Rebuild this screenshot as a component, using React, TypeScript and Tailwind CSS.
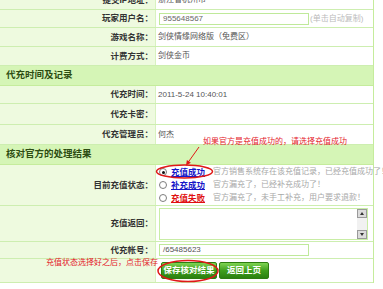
import React from "react";

// 代充订单核对页面 (截图片段)
const FONT = "font-['Liberation_Sans','Noto_Sans_CJK_SC',sans-serif]";

function Row({
  label,
  className = "h-[19px]",
  children,
}: {
  label?: string;
  className?: string;
  children?: React.ReactNode;
}) {
  return (
    <div className={`flex border-b border-[#cdeeb0] ${className}`}>
      <div className="w-[155px] shrink-0 bg-[#eefadf] flex items-center justify-end pr-[2px] text-[8.5px] font-bold text-[#333]">
        {label}
      </div>
      <div className="flex-1 min-w-0 bg-white border-l border-[#d8f2c0] flex items-center pl-[2px] text-[8px] text-[#555]">
        {children}
      </div>
    </div>
  );
}

function Header({ title }: { title: string }) {
  return (
    <div className="h-[20px] bg-[#d5f5b6] border-b border-[#c5ec9c] flex items-center pl-[6px] text-[9.5px] font-bold text-[#2d4d12]">
      {title}
    </div>
  );
}

function Radio({ checked }: { checked?: boolean }) {
  return (
    <span className="w-[8px] h-[8px] rounded-full border border-[#7d7d7d] bg-white flex items-center justify-center shrink-0">
      {checked && <span className="w-[3px] h-[3px] rounded-full bg-[#111]" />}
    </span>
  );
}

const options = [
  { text: "充值成功", color: "text-[#1515c8]", desc: "官方销售系统存在该充值记录，已经充值成功了！", checked: true },
  { text: "补充成功", color: "text-[#1515c8]", desc: "官方漏充了，已经补充成功了！" },
  { text: "充值失败", color: "text-[#e01010]", desc: "官方漏充了，未手工补充，用户要求退款！" },
];

export default function App() {
  return (
    <div className={`relative w-[383px] h-[289px] overflow-hidden bg-white ${FONT}`}>
      <div className="w-[374px] -mt-[9px] border-r border-[#c5ec9c]">
        <Row label="提交IP地址：">浙江省杭州市</Row>
        <Row label="玩家用户名：" className="h-[18px]">
          <div className="ml-[1px] w-[150px] h-[12px] border border-[#bfe99a] flex items-center pl-[3px] text-[#666]">
            955648567
          </div>
          <span className="ml-[1px] text-[#bbb]">(单击自动复制)</span>
        </Row>
        <Row label="游戏名称：">剑侠情缘网络版（免费区）</Row>
        <Row label="计费方式：">剑侠金币</Row>

        <Header title="代充时间及记录" />
        <Row label="代充时间：" className="h-[18px]">2011-5-24 10:40:01</Row>
        <Row label="代充卡密：" className="h-[21px]" />
        <Row label="代充管理员：" className="h-[20px]">何杰</Row>

        <Header title="核对官方的处理结果" />
        <Row label="目前充值状态：" className="h-[41px]">
          <div className="flex flex-col pl-[1px]">
            {options.map((o) => (
              <div key={o.text} className="h-[13px] flex items-center whitespace-nowrap">
                <Radio checked={o.checked} />
                <span className={`ml-[4px] font-bold underline ${o.color} text-[8.5px]`}>{o.text}</span>
                <span className="ml-[8px] text-[#a8a8a8]">{o.desc}</span>
              </div>
            ))}
          </div>
        </Row>
        <Row label="充值返回：" className="h-[36px]">
          <div className="ml-[1px] w-[209px] h-[32px] border border-[#c8eda5] bg-white flex justify-end">
            <div className="w-[10px] h-full flex flex-col bg-[#f1f1f1]">
              <div className="h-[9px] bg-[#dcdcdc] border border-[#9a9a9a] flex items-center justify-center">
                <span className="border-x-[2.5px] border-x-transparent border-b-[3px] border-b-[#333]" />
              </div>
              <div className="flex-1" />
              <div className="h-[9px] bg-[#dcdcdc] border border-[#9a9a9a] flex items-center justify-center">
                <span className="border-x-[2.5px] border-x-transparent border-t-[3px] border-t-[#333]" />
              </div>
            </div>
          </div>
        </Row>
        <Row label="代充帐号：" className="h-[17px]">
          <div className="ml-[1px] w-[150px] h-[12px] border border-[#bfe99a] flex items-center pl-[3px] text-[#555]">
            /65485623
          </div>
        </Row>
        <Row label="" className="h-[24px]">
          <div className="ml-[3px] flex gap-[2px]">
            <button
              type="button"
              className="w-[56px] h-[17px] rounded-[2px] border border-[#2d7d10] bg-gradient-to-b from-[#7ed452] via-[#3f9f1c] to-[#2a8010] text-white text-[8.5px] font-bold"
            >
              保存核对结果
            </button>
            <button
              type="button"
              className="w-[50px] h-[17px] rounded-[2px] border border-[#2d7d10] bg-gradient-to-b from-[#7ed452] via-[#3f9f1c] to-[#2a8010] text-white text-[8.5px] font-bold"
            >
              返回上页
            </button>
          </div>
        </Row>
      </div>

      {/* 标注 */}
      <span className="absolute left-[203px] top-[137px] text-[8px] leading-[9px] text-[#e4202a] whitespace-nowrap">
        如果官方是充值成功的，请选择充值成功
      </span>
      <span className="absolute left-[46px] top-[258px] text-[8px] leading-[9px] text-[#e4202a] whitespace-nowrap">
        充值状态选择好之后，点击保存
      </span>
      <svg className="absolute left-0 top-0 pointer-events-none" width="383" height="289">
        <ellipse cx="184.5" cy="171.5" rx="28" ry="6.5" fill="none" stroke="#e01818" strokeWidth="1.5" />
        <ellipse cx="188" cy="271" rx="30" ry="10.5" fill="none" stroke="#e01818" strokeWidth="1.5" />
        <line x1="199" y1="147" x2="188" y2="162.5" stroke="#e01818" strokeWidth="1" />
        <polygon points="186,165.5 190.9,162.8 186.9,160" fill="#e01818" />
      </svg>
    </div>
  );
}
